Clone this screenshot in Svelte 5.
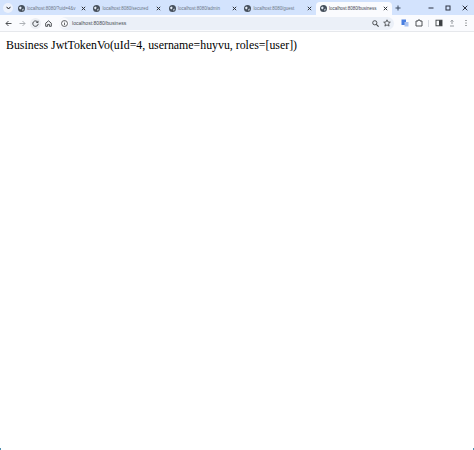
<script lang="ts">
    const tabs = [
        { title: "localhost:8080/?uid=4&v", active: false },
        { title: "localhost:8080/secured", active: false },
        { title: "localhost:8080/admin", active: false },
        { title: "localhost:8080/guest", active: false },
        { title: "localhost:8080/business", active: true },
    ];
</script>

<div class="window">
    <div class="tabstrip">
        <div class="tabsearch">
            <svg width="5" height="4" viewBox="0 0 5 4"><path d="M0.5 0.8 L2.5 3 L4.5 0.8" fill="none" stroke="#1f1f1f" stroke-width="1" /></svg>
        </div>
        {#each tabs as tab}
            <div class="tab" class:active={tab.active}>
                <svg class="globe" width="7" height="7" viewBox="0 0 7 7">
                    <circle cx="3.5" cy="3.5" r="3.5" fill="#46505c" />
                    <path d="M1.2 2.2 L3 1.4 L3.6 3 L2.4 4.4 L1.2 3.4 Z M4.4 4.2 L5.8 3.6 L5.2 5.6 L4.2 5.6 Z" fill="#e8eef8" />
                </svg>
                <span class="title">{tab.title}</span>
                <svg class="close" width="5" height="5" viewBox="0 0 5 5"><path d="M0.8 0.8 L4.2 4.2 M4.2 0.8 L0.8 4.2" stroke="#30343a" stroke-width="1" /></svg>
            </div>
        {/each}
        <svg class="newtab" width="6" height="6" viewBox="0 0 6 6"><path d="M3 0.5 V5.5 M0.5 3 H5.5" stroke="#3b4a60" stroke-width="1" /></svg>
        <div class="controls">
            <svg width="6" height="6" viewBox="0 0 6 6"><path d="M0.5 3 H5.5" stroke="#2a3140" stroke-width="1" /></svg>
            <svg width="6" height="6" viewBox="0 0 6 6"><rect x="1" y="1" width="4" height="4" fill="none" stroke="#2a3140" stroke-width="1" /></svg>
            <svg width="6" height="6" viewBox="0 0 6 6"><path d="M0.7 0.7 L5.3 5.3 M5.3 0.7 L0.7 5.3" stroke="#2a3140" stroke-width="1" /></svg>
        </div>
    </div>

    <div class="toolbar">
        <svg class="back" width="7" height="7" viewBox="0 0 7 7"><path d="M6.5 3.5 H1 M3.5 1 L1 3.5 L3.5 6" fill="none" stroke="#3c4043" stroke-width="0.9" /></svg>
        <svg class="forward" width="7" height="7" viewBox="0 0 7 7"><path d="M0.5 3.5 H6 M3.5 1 L6 3.5 L3.5 6" fill="none" stroke="#a4a8ae" stroke-width="0.9" /></svg>
        <div class="reload">
            <svg width="7" height="7" viewBox="0 0 7 7"><path d="M5.8 2.2 A2.7 2.7 0 1 0 6.2 3.8 M6 0.8 V2.5 H4.3" fill="none" stroke="#3c4043" stroke-width="0.9" /></svg>
        </div>
        <svg class="home" width="7" height="7" viewBox="0 0 7 7"><path d="M0.7 3.2 L3.5 0.8 L6.3 3.2 V6.3 H4.4 V4.4 H2.6 V6.3 H0.7 Z" fill="none" stroke="#3c4043" stroke-width="0.9" /></svg>
        <div class="omnibox">
            <div class="chip">
                <svg width="7" height="7" viewBox="0 0 7 7">
                    <circle cx="3.5" cy="3.5" r="3" fill="none" stroke="#3c4043" stroke-width="0.8" />
                    <path d="M3.5 3 V5.2 M3.5 1.7 V2.4" stroke="#3c4043" stroke-width="0.8" />
                </svg>
            </div>
            <span class="url">localhost:8080/business</span>
            <svg class="zoom" width="7" height="7" viewBox="0 0 7 7"><circle cx="2.8" cy="2.8" r="2.1" fill="none" stroke="#3c4043" stroke-width="0.9" /><path d="M4.3 4.3 L6.6 6.6" stroke="#3c4043" stroke-width="1.1" /></svg>
            <svg class="star" width="8" height="8" viewBox="0 0 8 8"><path d="M4 0.8 L5 3 L7.3 3.2 L5.5 4.8 L6.1 7.1 L4 5.9 L1.9 7.1 L2.5 4.8 L0.7 3.2 L3 3 Z" fill="none" stroke="#3c4043" stroke-width="0.8" /></svg>
        </div>
        <div class="extensions">
            <svg width="8" height="8" viewBox="0 0 8 8"><rect x="0.5" y="0.5" width="4.5" height="5.5" fill="#4a7fe0" /><rect x="3.5" y="3" width="4" height="4.5" fill="#a9c2f0" /></svg>
            <svg width="8" height="8" viewBox="0 0 8 8"><path d="M1 2 H3 V1 H5 V2 H7 V7 H1 Z" fill="none" stroke="#3c4043" stroke-width="0.9" /></svg>
            <span class="divider"></span>
            <svg width="8" height="8" viewBox="0 0 8 8"><rect x="1" y="1.2" width="6" height="5.6" fill="none" stroke="#3c4043" stroke-width="0.9" /><rect x="4" y="1.2" width="3" height="5.6" fill="#3c4043" /></svg>
            <svg width="8" height="8" viewBox="0 0 8 8"><path d="M4 5 V1.2 M2.6 2.6 L4 1.2 L5.4 2.6 M2 7 H6" fill="none" stroke="#8a8f95" stroke-width="0.9" /></svg>
            <svg width="8" height="8" viewBox="0 0 8 8"><path d="M4 1 V1.9 M4 3.6 V4.5 M4 6.1 V7" stroke="#3c4043" stroke-width="1" /></svg>
        </div>
    </div>

    <main class="page">Business JwtTokenVo(uId=4, username=huyvu, roles=[user])</main>

    <div class="corners">
        <span class="corner"></span>
        <span class="corner"></span>
    </div>
</div>

<style>
    :global(body) {
        margin: 0;
        background: #fff;
    }

    .window {
        width: 474px;
        height: 450px;
        display: flex;
        flex-direction: column;
        overflow: hidden;
        background: #fff;
    }

    .tabstrip {
        height: 15px;
        display: flex;
        align-items: flex-end;
        background: #d3e3fd;
        font-family: "Liberation Sans", sans-serif;
    }

    .tabsearch {
        width: 10px;
        height: 10px;
        margin: 0 1px 2px 3px;
        border-radius: 50%;
        background: #edf2fc;
        display: flex;
        align-items: center;
        justify-content: center;
    }

    .tab {
        width: 75.5px;
        height: 13px;
        padding: 0 4px 0 3.5px;
        box-sizing: border-box;
        display: flex;
        align-items: center;
        gap: 2.5px;
        border-radius: 4px 4px 0 0;
        color: #6b7686;
    }

    .tab.active {
        background: #fafbfe;
        color: #3c4350;
    }

    .globe {
        flex: none;
    }

    .title {
        flex: 1;
        min-width: 0;
        white-space: nowrap;
        font-size: 4.45px;
    }

    .close {
        flex: none;
    }

    .newtab {
        margin: 0 0 4px 3.5px;
    }

    .controls {
        margin-left: auto;
        display: flex;
        gap: 11px;
        padding: 0 6px 4px 0;
    }

    .toolbar {
        height: 16px;
        display: flex;
        align-items: center;
        background: #fafbfe;
        border-bottom: 1px solid #e6e8ec;
        font-family: "Liberation Sans", sans-serif;
    }

    .back {
        flex: none;
        margin-left: 4.5px;
    }

    .forward {
        flex: none;
        margin-left: 7px;
    }

    .reload {
        width: 11px;
        height: 11px;
        margin-left: 4px;
        border-radius: 50%;
        background: #eceff4;
        display: flex;
        align-items: center;
        justify-content: center;
    }

    .home {
        flex: none;
        margin-left: 4px;
    }

    .omnibox {
        width: 335px;
        height: 13px;
        margin-left: 7.5px;
        padding-right: 3px;
        box-sizing: border-box;
        display: flex;
        align-items: center;
        border-radius: 7px;
        background: #ebf0f8;
    }

    .chip {
        width: 10px;
        height: 10px;
        border-radius: 50%;
        background: #fafbfe;
        display: flex;
        align-items: center;
        justify-content: center;
    }

    .url {
        margin-left: 3px;
        font-size: 5.1px;
        color: #4a4f55;
    }

    .zoom {
        margin-left: auto;
    }

    .star {
        margin-left: 4.5px;
    }

    .extensions {
        display: flex;
        align-items: center;
        gap: 5.5px;
        margin-left: 7px;
    }

    .divider {
        width: 1px;
        height: 7px;
        background: #d5d9e0;
    }

    .page {
        flex: 1;
        padding: 6px 6px 0;
        font-family: "Liberation Serif", serif;
        font-size: 11.85px;
        line-height: 14px;
        color: #000;
        white-space: nowrap;
    }

    .corners {
        height: 2px;
        display: flex;
        justify-content: space-between;
    }

    .corner {
        width: 1px;
        height: 2px;
        background: #4d8fb0;
    }
</style>
